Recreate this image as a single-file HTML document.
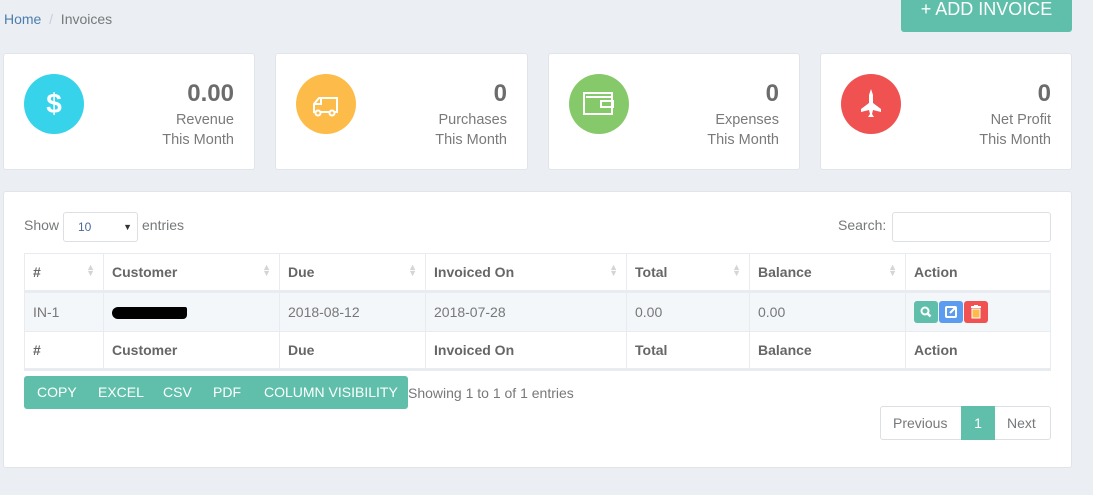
<!DOCTYPE html>
<html><head><style>
*{box-sizing:border-box;margin:0;padding:0}
body{width:1093px;height:495px;background:#ebeef3;font-family:"Liberation Sans",sans-serif;font-size:14px;color:#76787a;position:relative;overflow:hidden}
.abs{position:absolute}
.bc{left:4px;top:11px;font-size:14px}
.bc .h{color:#4a7fae}
.add{left:901px;top:-2px;width:171px;height:34px;background:#5fbfaa;color:#fff;font-size:18px;text-align:center;line-height:22px;border-radius:0 0 3px 3px}
.card{top:53px;height:117px;background:#fff;border:1px solid #e1e4e8;border-radius:3px}
.circ{left:20px;top:20px;width:60px;height:60px;border-radius:50%}
.num{right:20px;top:26px;font-size:24px;font-weight:bold;color:#6c6c6c}
.lbl{right:20px;top:56px;text-align:right;line-height:20px;font-size:14.5px;color:#7a7a7a}
.panel{left:3px;top:191px;width:1069px;height:277px;background:#fff;border:1px solid #e1e4e8;border-radius:3px}
table{position:absolute;left:24px;top:253px;width:1027px;border-collapse:collapse}
td,th{border:1px solid #e8ebef;text-align:left;padding:0 8px;font-size:14px}
th{font-weight:bold;color:#666;height:38px}
thead th{border-bottom:3px solid #e8ebef}
tbody td{height:40px;background:#f4f7fa;color:#777}
tfoot th{border-bottom:3px solid #e8ebef}
.sort{float:right;color:#d5d5d5;font-size:9px;line-height:6px;margin-top:0}
.btns{left:24px;top:376px;width:384px;height:33px;background:#5fbfaa;border-radius:3px;color:#fff;font-size:14px;line-height:33px}
.btns span{position:absolute;top:0}
.ib{display:inline-block;width:24px;height:22px;border-radius:3px;vertical-align:middle;margin-right:1px;position:relative}
</style></head><body>
<div class="abs bc"><span class="h">Home</span> <span style="color:#ccd">&nbsp;/&nbsp;</span> Invoices</div>
<div class="abs add">+ ADD INVOICE</div>

<div class="abs card" style="left:3px;width:252px">
<div class="abs circ" style="background:#36d3ea;color:#fff;font-size:28px;font-weight:bold;text-align:center;line-height:60px">$</div>
<div class="abs num">0.00</div><div class="abs lbl">Revenue<br>This Month</div></div>
<div class="abs card" style="left:275px;width:253px">
<div class="abs circ" style="background:#fdbb4a"><svg width="60" height="60"><g fill="none" stroke="#fff" stroke-width="2"><path d="M23 24h18v14H18v-8l5-6z"/><path d="M19 30h6v-5"/><circle cx="22" cy="39" r="2.5" fill="#fdbb4a"/><circle cx="36" cy="39" r="2.5" fill="#fdbb4a"/></g></svg></div>
<div class="abs num">0</div><div class="abs lbl">Purchases<br>This Month</div></div>
<div class="abs card" style="left:548px;width:252px">
<div class="abs circ" style="background:#86c96b"><svg width="60" height="60"><g fill="none" stroke="#fff" stroke-width="2"><rect x="15" y="19" width="28" height="21"/><path d="M17 23h26"/><rect x="32" y="27" width="12" height="6"/></g></svg></div>
<div class="abs num">0</div><div class="abs lbl">Expenses<br>This Month</div></div>
<div class="abs card" style="left:820px;width:252px">
<div class="abs circ" style="background:#f05252"><svg width="60" height="60"><path fill="#fff" d="M30 15l2 6v8l8 6v3l-8-2-1 4 2 3h-6l2-3-1-4-8 2v-3l8-6v-8z"/></svg></div>
<div class="abs num">0</div><div class="abs lbl">Net Profit<br>This Month</div></div>

<div class="abs panel"></div>
<div class="abs" style="left:24px;top:217px">Show</div>
<div class="abs" style="left:63px;top:212px;width:75px;height:30px;border:1px solid #dcdfe3;border-radius:3px;font-size:12px;line-height:28px;padding-left:14px;color:#4a6a9a">10<span style="position:absolute;right:5px;font-size:9px;color:#333">▼</span></div>
<div class="abs" style="left:142px;top:217px">entries</div>
<div class="abs" style="left:838px;top:217px">Search:</div>
<div class="abs" style="left:892px;top:212px;width:159px;height:30px;border:1px solid #dcdfe3;border-radius:3px"></div>

<table>
<colgroup><col style="width:79px"><col style="width:176px"><col style="width:146px"><col style="width:201px"><col style="width:123px"><col style="width:156px"><col></colgroup>
<thead><tr><th>#<span class="sort">▲<br>▼</span></th><th>Customer<span class="sort">▲<br>▼</span></th><th>Due<span class="sort">▲<br>▼</span></th><th>Invoiced On<span class="sort">▲<br>▼</span></th><th>Total<span class="sort">▲<br>▼</span></th><th>Balance<span class="sort">▲<br>▼</span></th><th>Action</th></tr></thead>
<tbody><tr><td>IN-1</td><td><span style="display:inline-block;width:75px;height:12px;background:#000;border-radius:6px 2px 4px 6px;vertical-align:middle"></span></td><td>2018-08-12</td><td>2018-07-28</td><td>0.00</td><td>0.00</td><td>
<span class="ib" style="background:#5fbfaa"><svg width="24" height="22"><circle cx="11" cy="10" r="3.5" fill="none" stroke="#fff" stroke-width="2"/><path d="M13.5 12.5l3 3" stroke="#fff" stroke-width="2.5"/></svg></span><span class="ib" style="background:#5b9cf0"><svg width="24" height="22"><rect x="7" y="6" width="10" height="10" rx="1" fill="none" stroke="#fff" stroke-width="2"/><path d="M11 12l6-6" stroke="#fff" stroke-width="2"/></svg></span><span class="ib" style="background:#f05252"><svg width="24" height="22"><path d="M7 6h10M10 5h4" stroke="#fff" stroke-width="2"/><rect x="8" y="8" width="8" height="9" fill="#fdbb4a" stroke="#fff"/></svg></span></td></tr></tbody>
<tfoot><tr><th>#</th><th>Customer</th><th>Due</th><th>Invoiced On</th><th>Total</th><th>Balance</th><th>Action</th></tr></tfoot>
</table>

<div class="abs btns"><span style="left:13px">COPY</span><span style="left:74px">EXCEL</span><span style="left:139px">CSV</span><span style="left:189px">PDF</span><span style="left:240px">COLUMN VISIBILITY</span></div>
<div class="abs" style="left:408px;top:385px">Showing 1 to 1 of 1 entries</div>
<div class="abs" style="left:880px;top:406px;width:171px;height:34px;border:1px solid #dcdfe3;border-radius:3px;line-height:32px">
<span class="abs" style="left:12px">Previous</span>
<span class="abs" style="left:80px;top:-1px;width:34px;height:34px;background:#5fbfaa;color:#fff;text-align:center;line-height:34px">1</span>
<span class="abs" style="left:126px">Next</span></div>
</body></html>
